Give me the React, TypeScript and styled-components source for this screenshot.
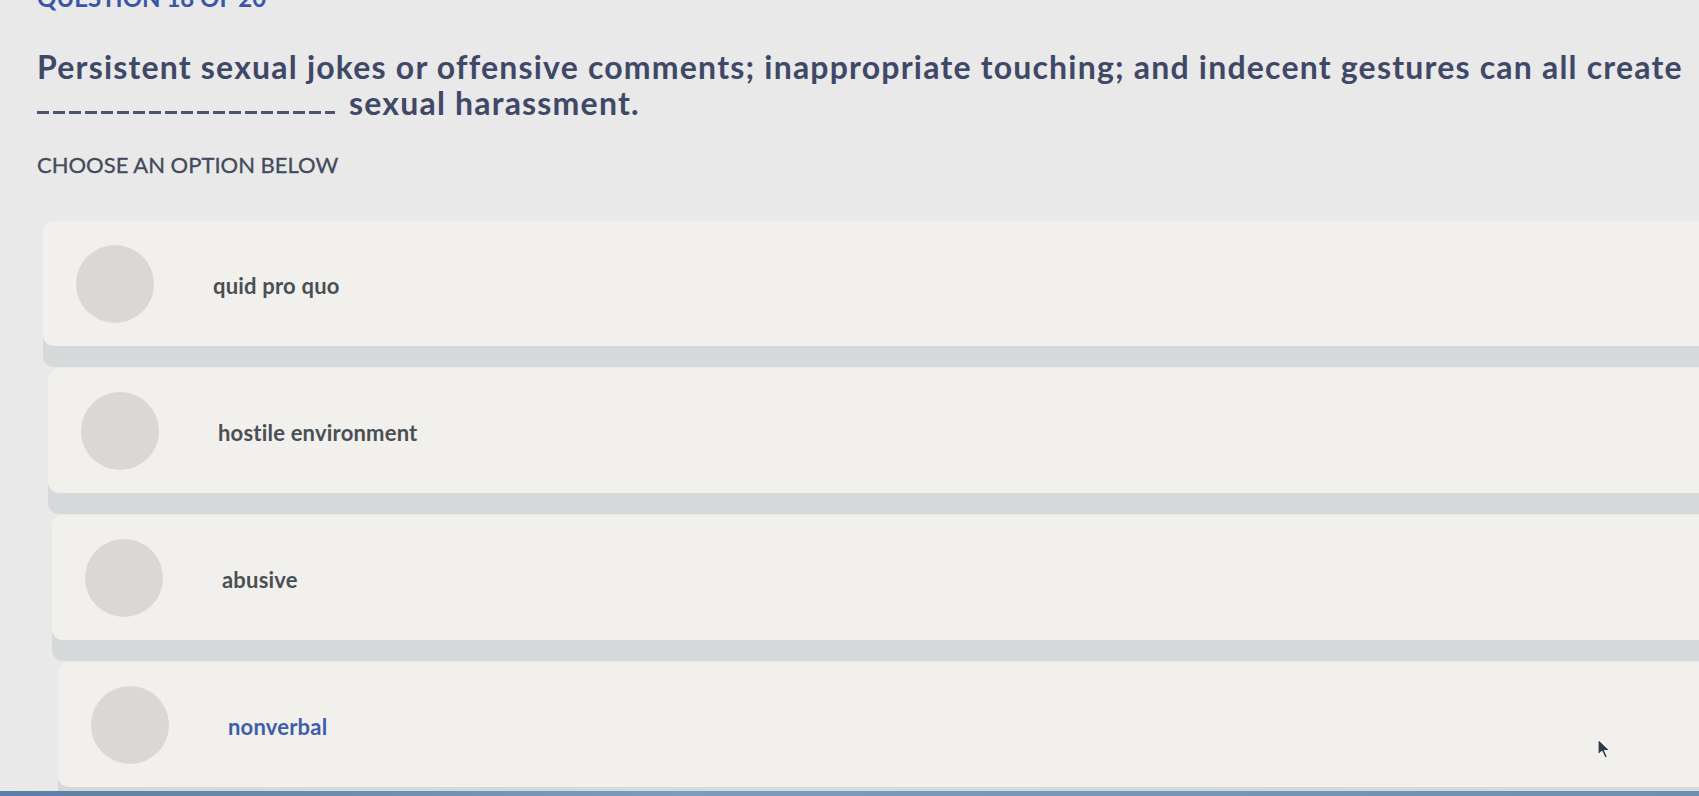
import React from "react"
import styled, { createGlobalStyle } from "styled-components"

const GlobalStyle = createGlobalStyle`
  html, body {
    margin: 0;
    padding: 0;
    background: #e8e9e8;
    overflow: hidden;
  }
  body {
    font-family: Lato, "Open Sans", sans-serif;
  }
`

const Page = styled.div`
  position: relative;
  height: 796px;
  overflow: hidden;
  padding-left: 37px;
  display: flex;
  flex-direction: column;
`

const Counter = styled.div`
  margin-top: -16px;
  font-size: 24px;
  line-height: 1.2;
  font-weight: 700;
  color: #3a55a8;
`

const Question = styled.h1`
  margin: 36px 0 0;
  font-size: 32px;
  line-height: 36px;
  font-weight: 700;
  letter-spacing: 1.2px;
  color: #3f4866;
  white-space: nowrap;
`

const Blank = styled.span`
  display: inline-block;
  width: 298px;
  height: 3px;
  margin-right: 14px;
  vertical-align: 1px;
  background: repeating-linear-gradient(
    to right,
    #4a5370 0 12px,
    transparent 12px 16px
  );
`

const Prompt = styled.div`
  margin-top: 31px;
  font-size: 22px;
  line-height: 1.2;
  font-weight: 400;
  color: #434a5c;
  -webkit-text-stroke: 0.3px #434a5c;
`

const Options = styled.div`
  margin-top: 43px;
  display: flex;
  flex-direction: column;
  gap: 22px;
`

const Card = styled.div<{ $indent: number }>`
  display: flex;
  align-items: center;
  height: 125px;
  margin-left: ${(p) => p.$indent}px;
  margin-right: -30px;
  padding-left: 33px;
  background: #f1f0ed;
  border-radius: 11px;
  box-shadow: 0 21px 0 0 #d6d9da;
`

const Radio = styled.div`
  width: 78px;
  height: 78px;
  flex: none;
  border-radius: 50%;
  background: #d9d8d4;
`

const Label = styled.span<{ $active?: boolean }>`
  margin-left: 59px;
  padding-top: 4px;
  font-size: 22px;
  font-weight: 700;
  letter-spacing: 0.2px;
  color: ${(p) => (p.$active ? "#3e5dab" : "#4a4f54")};
`

const BottomStrip = styled.div`
  position: absolute;
  left: 0;
  right: 0;
  bottom: 0;
  height: 5px;
  background: linear-gradient(to right, #5c7ea4, #7c9cbf 40%, #6d8fb5);
`

const Pointer = styled.svg`
  position: absolute;
  left: 1597px;
  top: 738px;
  width: 16px;
  height: 22px;
`

const options = [
  { text: "quid pro quo", indent: 6 },
  { text: "hostile environment", indent: 11 },
  { text: "abusive", indent: 15 },
  { text: "nonverbal", indent: 21, active: true },
]

export default function App() {
  return (
    <>
      <GlobalStyle />
      <Page>
        <Counter>QUESTION 18 OF 20</Counter>
        <Question>
          Persistent sexual jokes or offensive comments; inappropriate touching; and indecent gestures can all create
          <br />
          <Blank />
          sexual harassment.
        </Question>
        <Prompt>CHOOSE AN OPTION BELOW</Prompt>
        <Options>
          {options.map((o) => (
            <Card key={o.text} $indent={o.indent}>
              <Radio />
              <Label $active={o.active}>{o.text}</Label>
            </Card>
          ))}
        </Options>
        <Pointer viewBox="0 0 16 22">
          <path
            d="M1 1 L1 17 L5 13.5 L8 20 L10.5 19 L7.6 12.6 L13 12.6 Z"
            fill="#2e3a45"
            stroke="#f4f4f4"
            strokeWidth="1.2"
            strokeLinejoin="round"
          />
        </Pointer>
        <BottomStrip />
      </Page>
    </>
  )
}
